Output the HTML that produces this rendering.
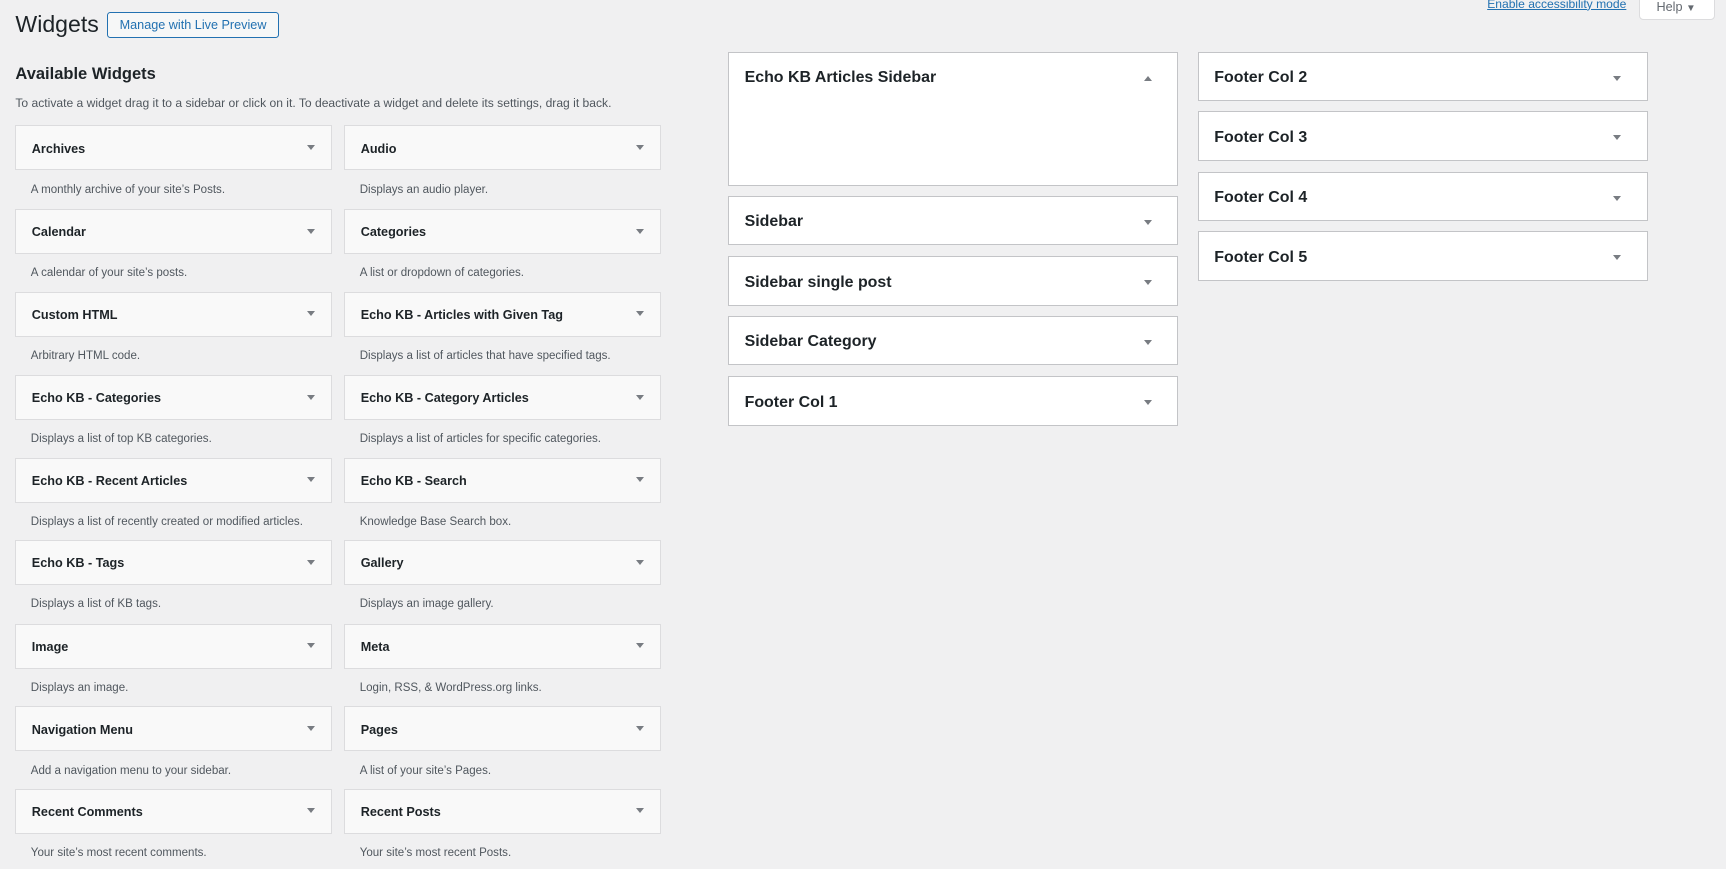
<!DOCTYPE html>
<html><head><meta charset="utf-8"><style>
*{box-sizing:border-box;margin:0;padding:0}
html,body{width:1726px;height:869px;overflow:hidden;background:#f0f0f1}
#w{zoom:1.1;position:relative;width:1569px;height:790px;font-family:"Liberation Sans",sans-serif;color:#1d2327}
h1{position:absolute;left:14px;top:10px;font-size:21px;font-weight:400;color:#1d2327}
.btn{position:absolute;left:97px;top:11px;width:157px;height:24px;border:1px solid #2271b1;border-radius:3px;color:#2271b1;font-size:11.5px;line-height:22px;text-align:center;background:#f6f7f7}
.acc{position:absolute;left:1352px;top:-3px;font-size:11px;color:#2271b1;text-decoration:underline}
.help{position:absolute;left:1490px;top:-3px;width:69px;height:21px;background:#fff;border:1px solid #dcdcde;border-top:0;border-radius:0 0 4px 4px;font-size:11.5px;color:#646970;padding:3px 0 0 15px}
h2{position:absolute;left:14px;top:59px;font-size:15px;font-weight:700}
.desc{position:absolute;left:14px;top:87px;font-size:11px;color:#50575e}
.wd{position:absolute;width:288px;height:41px;background:#f9f9f9;border:1px solid #dcdcde;font-size:11.5px;font-weight:700;padding:14px 0 0 14px}
.ar{position:absolute;right:15px;top:17px;width:0;height:0;border-left:4px solid transparent;border-right:4px solid transparent;border-top:5px solid #787c82}
.up{border-top:0;border-bottom:5px solid #787c82;top:20px}
.wdd{position:absolute;font-size:10.5px;color:#50575e}
.sb{position:absolute;width:409px;height:45px;background:#fff;border:1px solid #c3c4c7;font-size:14.5px;font-weight:700;padding:15px 0 0 14px;color:#1d2327}
.sb .ar{top:21px;right:23px}
</style></head><body><div id="w">
<h1>Widgets</h1>
<div class="btn">Manage with Live Preview</div>
<div class="acc">Enable accessibility mode</div>
<div class="help">Help <span style="font-size:9px">▼</span></div>
<h2>Available Widgets</h2>
<div class="desc">To activate a widget drag it to a sidebar or click on it. To deactivate a widget and delete its settings, drag it back.</div>

<div class="wd" style="left:14px;top:114px">Archives<i class="ar"></i></div>
<div class="wdd" style="left:28px;top:167px">A monthly archive of your site’s Posts.</div>
<div class="wd" style="left:313px;top:114px">Audio<i class="ar"></i></div>
<div class="wdd" style="left:327px;top:167px">Displays an audio player.</div>

<div class="wd" style="left:14px;top:190px">Calendar<i class="ar"></i></div>
<div class="wdd" style="left:28px;top:243px">A calendar of your site’s posts.</div>
<div class="wd" style="left:313px;top:190px">Categories<i class="ar"></i></div>
<div class="wdd" style="left:327px;top:243px">A list or dropdown of categories.</div>

<div class="wd" style="left:14px;top:265px">Custom HTML<i class="ar"></i></div>
<div class="wdd" style="left:28px;top:318px">Arbitrary HTML code.</div>
<div class="wd" style="left:313px;top:265px">Echo KB - Articles with Given Tag<i class="ar"></i></div>
<div class="wdd" style="left:327px;top:318px">Displays a list of articles that have specified tags.</div>

<div class="wd" style="left:14px;top:341px">Echo KB - Categories<i class="ar"></i></div>
<div class="wdd" style="left:28px;top:394px">Displays a list of top KB categories.</div>
<div class="wd" style="left:313px;top:341px">Echo KB - Category Articles<i class="ar"></i></div>
<div class="wdd" style="left:327px;top:394px">Displays a list of articles for specific categories.</div>

<div class="wd" style="left:14px;top:416px">Echo KB - Recent Articles<i class="ar"></i></div>
<div class="wdd" style="left:28px;top:469px">Displays a list of recently created or modified articles.</div>
<div class="wd" style="left:313px;top:416px">Echo KB - Search<i class="ar"></i></div>
<div class="wdd" style="left:327px;top:469px">Knowledge Base Search box.</div>

<div class="wd" style="left:14px;top:491px">Echo KB - Tags<i class="ar"></i></div>
<div class="wdd" style="left:28px;top:544px">Displays a list of KB tags.</div>
<div class="wd" style="left:313px;top:491px">Gallery<i class="ar"></i></div>
<div class="wdd" style="left:327px;top:544px">Displays an image gallery.</div>

<div class="wd" style="left:14px;top:567px">Image<i class="ar"></i></div>
<div class="wdd" style="left:28px;top:620px">Displays an image.</div>
<div class="wd" style="left:313px;top:567px">Meta<i class="ar"></i></div>
<div class="wdd" style="left:327px;top:620px">Login, RSS, &amp; WordPress.org links.</div>

<div class="wd" style="left:14px;top:642px">Navigation Menu<i class="ar"></i></div>
<div class="wdd" style="left:28px;top:695px">Add a navigation menu to your sidebar.</div>
<div class="wd" style="left:313px;top:642px">Pages<i class="ar"></i></div>
<div class="wdd" style="left:327px;top:695px">A list of your site’s Pages.</div>

<div class="wd" style="left:14px;top:717px">Recent Comments<i class="ar"></i></div>
<div class="wdd" style="left:28px;top:770px">Your site’s most recent comments.</div>
<div class="wd" style="left:313px;top:717px">Recent Posts<i class="ar"></i></div>
<div class="wdd" style="left:327px;top:770px">Your site’s most recent Posts.</div>

<div class="sb" style="left:662px;top:47px;height:122px">Echo KB Articles Sidebar<i class="ar up"></i></div>
<div class="sb" style="left:662px;top:178px">Sidebar<i class="ar"></i></div>
<div class="sb" style="left:662px;top:233px">Sidebar single post<i class="ar"></i></div>
<div class="sb" style="left:662px;top:287px">Sidebar Category<i class="ar"></i></div>
<div class="sb" style="left:662px;top:342px">Footer Col 1<i class="ar"></i></div>

<div class="sb" style="left:1089px;top:47px">Footer Col 2<i class="ar"></i></div>
<div class="sb" style="left:1089px;top:101px">Footer Col 3<i class="ar"></i></div>
<div class="sb" style="left:1089px;top:156px">Footer Col 4<i class="ar"></i></div>
<div class="sb" style="left:1089px;top:210px">Footer Col 5<i class="ar"></i></div>
</div></body></html>
